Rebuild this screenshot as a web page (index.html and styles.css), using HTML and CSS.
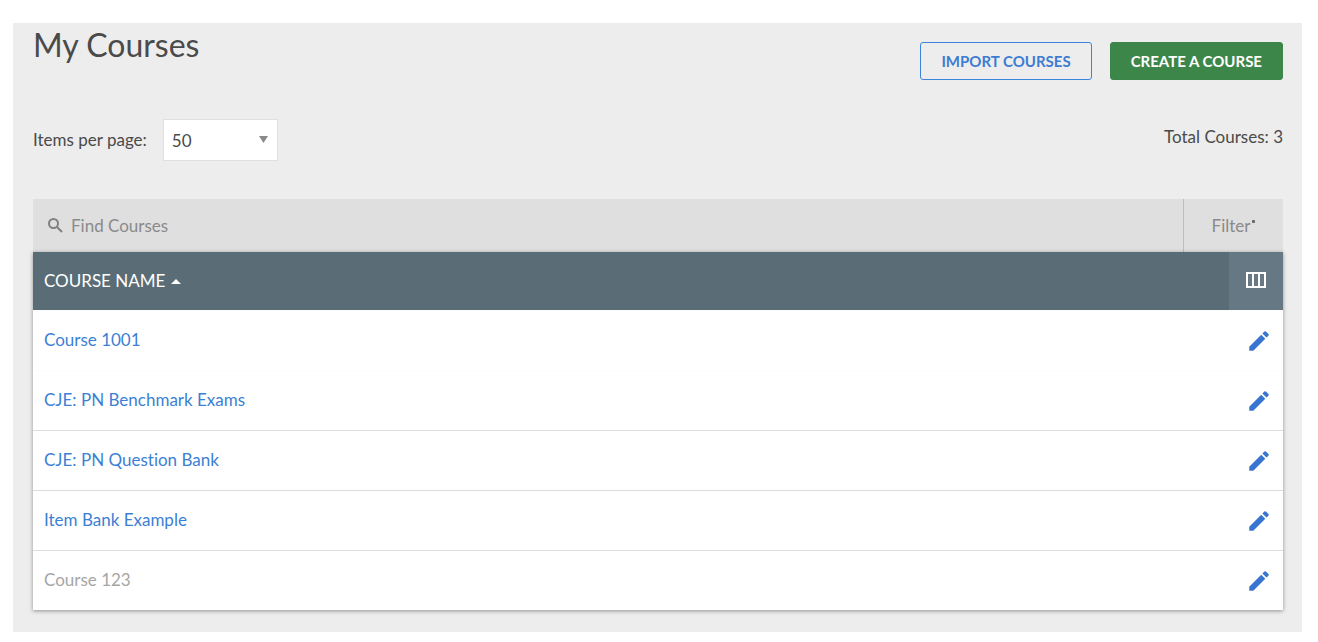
FILE: index.html
```
<!DOCTYPE html>
<html lang="en">
<head>
<meta charset="utf-8">
<title>My Courses</title>
<link rel="stylesheet" href="styles.css">
</head>
<body>
<svg class="sprite" aria-hidden="true">
  <symbol id="pencil" viewBox="0 0 24 24"><path d="M3 17.25V21h3.75L17.81 9.94l-3.75-3.75L3 17.25zM20.71 7.04a1 1 0 0 0 0-1.41l-2.34-2.34a1 1 0 0 0-1.41 0l-1.83 1.83 3.75 3.75 1.83-1.83z"/></symbol>
</svg>
<main class="panel">
  <header class="top">
    <h1 class="title">My Courses</h1>
    <div class="actions">
      <button class="btn btn-outline" type="button">IMPORT COURSES</button>
      <button class="btn btn-primary" type="button">CREATE A COURSE</button>
    </div>
  </header>
  <div class="paging">
    <div class="per-page">
      <label for="per-page">Items per page:</label>
      <span class="select-wrap">
        <select id="per-page" class="select"><option>50</option></select>
        <svg class="caret" viewBox="0 0 9 7" aria-hidden="true"><path d="M0 0h9L4.500 7z"/></svg>
      </span>
    </div>
    <span class="total">Total Courses: 3</span>
  </div>
  <div class="search">
    <label class="search-field">
      <svg class="search-icon" viewBox="0 0 15 15" aria-hidden="true"><circle cx="5.500" cy="5.500" r="4.500"/><path d="M9 9l5 5"/></svg>
      <input class="search-input" type="text" placeholder="Find Courses" aria-label="Find Courses">
    </label>
    <button class="filter" type="button">Filter<span class="dot"></span></button>
  </div>
  <table class="courses">
    <thead>
      <tr>
        <th class="name-head" scope="col">COURSE NAME<svg class="sort" viewBox="0 0 10 5" aria-hidden="true"><path d="M0 5h10L5 0z"/></svg></th>
        <th class="cols-head" scope="col"><button class="icon-btn" type="button" aria-label="Columns"><svg class="cols-icon" viewBox="0 0 20 16" aria-hidden="true"><path d="M1 1h18v14H1zM7 1v14M13 1v14"/></svg></button></th>
      </tr>
    </thead>
    <tbody>
      <tr class="plain"><td><a class="link" href="#">Course 1001</a></td><td class="edit"><button class="icon-btn" type="button" aria-label="Edit"><svg class="pencil"><use href="#pencil"/></svg></button></td></tr>
      <tr class="plain"><td><a class="link" href="#">CJE: PN Benchmark Exams</a></td><td class="edit"><button class="icon-btn" type="button" aria-label="Edit"><svg class="pencil"><use href="#pencil"/></svg></button></td></tr>
      <tr><td><a class="link" href="#">CJE: PN Question Bank</a></td><td class="edit"><button class="icon-btn" type="button" aria-label="Edit"><svg class="pencil"><use href="#pencil"/></svg></button></td></tr>
      <tr><td><a class="link" href="#">Item Bank Example</a></td><td class="edit"><button class="icon-btn" type="button" aria-label="Edit"><svg class="pencil"><use href="#pencil"/></svg></button></td></tr>
      <tr><td><a class="link inactive" href="#">Course 123</a></td><td class="edit"><button class="icon-btn" type="button" aria-label="Edit"><svg class="pencil"><use href="#pencil"/></svg></button></td></tr>
    </tbody>
  </table>
</main>
</body>
</html>
```
FILE: styles.css
```
* { box-sizing: border-box; }
body {
  margin: 0;
  padding: 23px 16px 10px 13px;
  background: #fff;
  color: #4a4a4a;
  font: 17px/24px Lato, "Liberation Sans", sans-serif;
  font-variant-ligatures: none;
}
button, input, select { font: inherit; color: inherit; }
button { cursor: pointer; }
.sprite { display: none; }
.panel { padding: 0 19px 22px 20px; background: #ededed; }
.top { display: flex; justify-content: space-between; align-items: flex-start; }
.title { margin: 0; font-size: 32px; line-height: 44px; font-weight: 400; }
.actions { display: flex; gap: 18px; padding-top: 19px; }
.btn { height: 38px; padding: 0 20px; border: 1px solid #3b84dc; border-radius: 3px; font-size: 15px; line-height: 20px; font-weight: 700; }
.btn-outline { background: transparent; color: #3d7cd2; }
.btn-primary { background: #3d8649; border-color: #3d8649; color: #fff; }
.paging { display: flex; justify-content: space-between; align-items: flex-start; padding: 39px 0 38px; }
.per-page { display: flex; align-items: center; gap: 16px; }
.select-wrap { position: relative; display: block; }
.select { display: block; width: 115px; height: 42px; padding: 2px 8px 0; border: 1px solid #e0e0e0; border-radius: 0; background: #fff; appearance: none; }
.caret { position: absolute; right: 10px; top: 17px; width: 9px; height: 7px; fill: #8a8a8a; pointer-events: none; }
.total { padding-top: 6px; }
.search { display: flex; height: 53px; background: #dfdfdf; color: #8a8a8a; }
.search-field { display: flex; flex: 1; align-items: center; gap: 8px; padding-left: 15px; }
.search-icon { width: 15px; height: 15px; fill: none; stroke: #808080; stroke-width: 2; }
.search-input { flex: 1; padding: 0; border: 0; background: none; outline: 0; }
.search-input::placeholder { color: #8a8a8a; opacity: 1; }
.filter { display: flex; justify-content: center; align-items: center; gap: 2px; width: 100px; padding: 0; border: 0; border-left: 1px solid #bdbdbd; background: none; }
.dot { width: 3px; height: 3px; margin-bottom: 8px; border-radius: 1px; background: #666; }
.courses { position: relative; width: 100%; border-collapse: separate; border-spacing: 0; background: #fff; box-shadow: 0 1px 4px rgba(0, 0, 0, .4); }
.courses th { height: 58px; padding: 0 11px; background: #5a6d77; color: #fff; font-weight: 400; text-align: left; }
.courses .cols-head { width: 54px; padding: 0 0 6px; background: #667883; text-align: center; }
.sort { width: 10px; height: 5px; margin-left: 6px; vertical-align: 3px; fill: #fff; }
.icon-btn { display: inline-flex; padding: 0; border: 0; background: none; vertical-align: middle; }
.cols-icon { width: 20px; height: 16px; fill: none; stroke: #fff; stroke-width: 2; }
.courses td { height: 60px; padding: 0 11px 2px; border-top: 1px solid #dcdcdc; }
.courses .plain td { border-top-color: #fcfcfc; }
.courses .edit { padding: 0; text-align: center; }
.pencil { width: 26px; height: 26px; margin-left: 6px; fill: #3875d0; }
.link { color: #3d7fd4; text-decoration: none; }
.inactive { color: #a6a6a6; }
```
